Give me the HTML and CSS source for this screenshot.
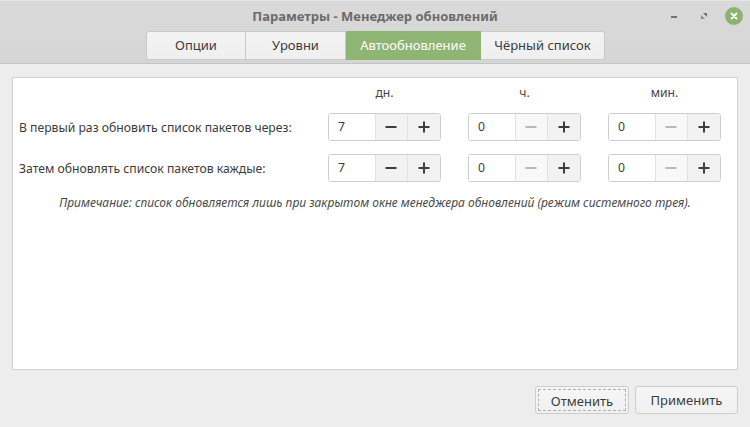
FILE: index.html
```html
<!DOCTYPE html>
<html lang="ru">
<head>
<meta charset="utf-8">
<title>Параметры - Менеджер обновлений</title>
<link rel="stylesheet" href="styles.css">
</head>
<body>
<div class="window">
  <header class="headerbar">
    <div class="titlerow">
      <div class="spacer"></div>
      <div class="title">Параметры - Менеджер обновлений</div>
      <div class="controls">
        <span class="ctl ctl-min"><svg width="8" height="8" viewBox="0 0 8 8"><rect x="1" y="4" width="6" height="2" fill="#747474"/></svg></span>
        <span class="ctl ctl-max"><svg width="8" height="8" viewBox="0 0 8 8"><path d="M3 1H7V5Z" fill="#6e6e6e"/><path d="M1 3V7H5Z" fill="#8a8a8a"/></svg></span>
        <span class="ctl ctl-close"><svg width="8" height="8" viewBox="0 0 8 8"><path d="M1.5 1.5L6.5 6.5M6.5 1.5L1.5 6.5" stroke="#fff" stroke-width="1.8" stroke-linecap="round"/></svg></span>
      </div>
    </div>
    <nav class="tabs">
      <div class="tab tab-1">Опции</div>
      <div class="tab tab-2">Уровни</div>
      <div class="tab tab-3 active">Автообновление</div>
      <div class="tab tab-4">Чёрный список</div>
    </nav>
  </header>

  <main class="content">
    <section class="frame">
      <div class="grid head">
        <div></div>
        <div class="colhead">дн.</div>
        <div class="colhead">ч.</div>
        <div class="colhead">мин.</div>
      </div>

      <div class="grid row row-first">
        <div class="label">В первый раз обновить список пакетов через:</div>
        <div class="spin">
          <div class="entry">7</div>
          <div class="btn"><svg width="12" height="12" viewBox="0 0 12 12"><rect x="0.5" y="5" width="11" height="2" fill="#3d3d3d"/></svg></div>
          <div class="btn"><svg width="12" height="12" viewBox="0 0 12 12"><rect x="0.5" y="5" width="11" height="2" fill="#3d3d3d"/><rect x="5" y="0.5" width="2" height="11" fill="#3d3d3d"/></svg></div>
        </div>
        <div class="spin">
          <div class="entry">0</div>
          <div class="btn disabled"><svg width="12" height="12" viewBox="0 0 12 12"><rect x="0.5" y="5" width="11" height="2" fill="#b8b8b8"/></svg></div>
          <div class="btn"><svg width="12" height="12" viewBox="0 0 12 12"><rect x="0.5" y="5" width="11" height="2" fill="#3d3d3d"/><rect x="5" y="0.5" width="2" height="11" fill="#3d3d3d"/></svg></div>
        </div>
        <div class="spin">
          <div class="entry">0</div>
          <div class="btn disabled"><svg width="12" height="12" viewBox="0 0 12 12"><rect x="0.5" y="5" width="11" height="2" fill="#b8b8b8"/></svg></div>
          <div class="btn"><svg width="12" height="12" viewBox="0 0 12 12"><rect x="0.5" y="5" width="11" height="2" fill="#3d3d3d"/><rect x="5" y="0.5" width="2" height="11" fill="#3d3d3d"/></svg></div>
        </div>
      </div>

      <div class="grid row row-second">
        <div class="label">Затем обновлять список пакетов каждые:</div>
        <div class="spin">
          <div class="entry">7</div>
          <div class="btn"><svg width="12" height="12" viewBox="0 0 12 12"><rect x="0.5" y="5" width="11" height="2" fill="#3d3d3d"/></svg></div>
          <div class="btn"><svg width="12" height="12" viewBox="0 0 12 12"><rect x="0.5" y="5" width="11" height="2" fill="#3d3d3d"/><rect x="5" y="0.5" width="2" height="11" fill="#3d3d3d"/></svg></div>
        </div>
        <div class="spin">
          <div class="entry">0</div>
          <div class="btn disabled"><svg width="12" height="12" viewBox="0 0 12 12"><rect x="0.5" y="5" width="11" height="2" fill="#b8b8b8"/></svg></div>
          <div class="btn"><svg width="12" height="12" viewBox="0 0 12 12"><rect x="0.5" y="5" width="11" height="2" fill="#3d3d3d"/><rect x="5" y="0.5" width="2" height="11" fill="#3d3d3d"/></svg></div>
        </div>
        <div class="spin">
          <div class="entry">0</div>
          <div class="btn disabled"><svg width="12" height="12" viewBox="0 0 12 12"><rect x="0.5" y="5" width="11" height="2" fill="#b8b8b8"/></svg></div>
          <div class="btn"><svg width="12" height="12" viewBox="0 0 12 12"><rect x="0.5" y="5" width="11" height="2" fill="#3d3d3d"/><rect x="5" y="0.5" width="2" height="11" fill="#3d3d3d"/></svg></div>
        </div>
      </div>

      <p class="note">Примечание: список обновляется лишь при закрытом окне менеджера обновлений (режим системного трея).</p>
    </section>

    <div class="actions">
      <button class="button focused"><span>Отменить</span></button>
      <button class="button">Применить</button>
    </div>
  </main>
</div>
</body>
</html>
```

FILE: styles.css
```css
html, body {
  margin: 0;
  padding: 0;
}

body {
  width: 750px;
  height: 427px;
  background: #ededed;
  font-family: "Noto Sans", "Open Sans", sans-serif;
  font-size: 13px;
  color: #3c3c3c;
  overflow: hidden;
}

.window {
  display: flex;
  flex-direction: column;
  height: 427px;
}

.headerbar {
  height: 63px;
  border-bottom: 1px solid #c4c4c4;
  background: linear-gradient(#d9d9d9, #d6d6d6);
  box-shadow: inset 0 1px 0 #e4e4e4;
  display: flex;
  flex-direction: column;
}

.titlerow {
  height: 31px;
  display: grid;
  grid-template-columns: 1fr auto 1fr;
  align-items: center;
}

.title {
  font-weight: bold;
  color: #6b6b6b;
  font-size: 13px;
  padding-top: 1px;
}

.controls {
  display: flex;
  justify-content: flex-end;
  align-items: center;
  gap: 12px;
  padding-right: 7px;
  padding-top: 1px;
}

.ctl {
  width: 18px;
  height: 18px;
  display: flex;
  align-items: center;
  justify-content: center;
}

.ctl-close {
  border-radius: 50%;
  background: #8db46e;
}

.tabs {
  display: flex;
  justify-content: center;
  padding-left: 1px;
}

.tab {
  height: 27px;
  line-height: 27px;
  text-align: center;
  background: linear-gradient(#f3f3f3, #efefef);
  border: 1px solid #c9c9c9;
  border-left: none;
  color: #3c3c3c;
  box-sizing: content-box;
}

.tab-1 {
  width: 98px;
  border-left: 1px solid #c9c9c9;
  border-radius: 3px 0 0 3px;
}

.tab-2 { width: 99px; }
.tab-3 { width: 134px; }
.tab-4 {
  width: 123px;
  border-radius: 0 3px 3px 0;
}

.tab.active {
  background: #8fb574;
  border-color: #8fb574;
  color: #ffffff;
}

.content {
  flex: 1;
  display: flex;
  flex-direction: column;
  padding: 13px 12px 13px 12px;
}

.frame {
  height: 291px;
  background: #ffffff;
  border: 1px solid #d0d0d0;
  padding: 0 16px 0 6px;
  font-size: 12.2px;
}

.grid {
  display: grid;
  grid-template-columns: 1fr 113px 113px 113px;
  column-gap: 27px;
  align-items: center;
}

.head {
  margin-top: 6px;
  height: 18px;
}

.colhead {
  text-align: center;
  color: #454545;
  line-height: 18px;
}

.row {
  height: 28px;
}

.row-first { margin-top: 11px; }
.row-second { margin-top: 13px; }

.label {
  color: #3c3c3c;
  white-space: nowrap;
}

.spin {
  display: flex;
  height: 26px;
  border: 1px solid #cfcfcf;
  border-radius: 3px;
  overflow: hidden;
  background: #fff;
}

.entry {
  width: 37px;
  padding-left: 9px;
  line-height: 26px;
  color: #3c3c3c;
  background: #fff;
}

.btn {
  width: 32px;
  border-left: 1px solid #e2e2e2;
  background: #f2f2f2;
  display: flex;
  align-items: center;
  justify-content: center;
}

.btn.disabled {
  background: #f8f8f8;
}

.note {
  margin: 12px 0 0 0;
  line-height: 18px;
  font-style: italic;
  font-size: 12px;
  text-align: center;
  color: #4a4a4a;
  padding-left: 10px;
}

.actions {
  margin-top: 16px;
  display: flex;
  justify-content: flex-end;
  gap: 6px;
}

.button {
  height: 28px;
  border: 1px solid #cdcdcd;
  border-radius: 3px;
  background: linear-gradient(#f6f6f6, #f0f0f0);
  font-family: "Noto Sans", "Open Sans", sans-serif;
  font-size: 13px;
  color: #3c3c3c;
  padding: 0;
  width: 103px;
}

.button.focused {
  width: 94px;
  padding: 2px;
}

.button.focused span {
  display: block;
  height: 100%;
  line-height: 22px;
  border: 1px dashed #b0b0b0;
  box-sizing: border-box;
}
```
